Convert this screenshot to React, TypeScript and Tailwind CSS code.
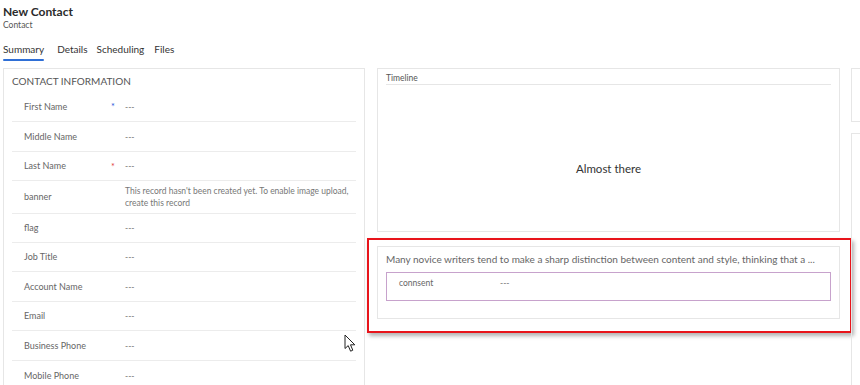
import React from 'react';

type Field = { label: string; value: string; req?: 'blue' | 'red'; h: number };

const fields: Field[] = [
  { label: 'First Name', value: '---', req: 'blue', h: 30 },
  { label: 'Middle Name', value: '---', h: 30 },
  { label: 'Last Name', value: '---', req: 'red', h: 29 },
  { label: 'banner', value: "This record hasn't been created yet. To enable image upload, create this record", h: 33 },
  { label: 'flag', value: '---', h: 29 },
  { label: 'Job Title', value: '---', h: 29 },
  { label: 'Account Name', value: '---', h: 30 },
  { label: 'Email', value: '---', h: 29 },
  { label: 'Business Phone', value: '---', h: 30 },
  { label: 'Mobile Phone', value: '---', h: 30 },
];

const FieldRow = ({ f, last }: { f: Field; last: boolean }) => (
  <div
    className={`mx-[8px] flex items-center ${last ? '' : 'border-b border-[#ececec]'}`}
    style={{ height: f.h }}
  >
    <div className="w-[99px] pl-[12px] text-[9px] text-[#666] shrink-0">{f.label}</div>
    <div className="w-[14px] shrink-0 text-[9px] leading-none">
      {f.req === 'blue' && <span className="text-[#2b55d9]">*</span>}
      {f.req === 'red' && <span className="text-[#e04040]">*</span>}
    </div>
    <div className="text-[8.5px] leading-[12px] text-[#777] pr-[4px]">{f.value}</div>
  </div>
);

const Cursor = () => (
  <svg width="13" height="19" viewBox="0 0 13 19" className="absolute left-[344px] top-[334px]">
    <path
      d="M1 1 L1 14.5 L4.2 11.6 L6.6 17.2 L8.8 16.2 L6.5 10.8 L10.8 10.8 Z"
      fill="#fff"
      stroke="#222"
      strokeWidth="1"
      strokeLinejoin="round"
    />
  </svg>
);

export default function App() {
  return (
    <div className="relative w-[860px] h-[385px] overflow-hidden bg-white font-['Lato','Open_Sans',sans-serif]">
      {/* header */}
      <div className="pl-[3px] pt-[4px]">
        <div className="text-[12px] leading-[16px] font-bold text-[#2b2b2b]">New Contact</div>
        <div className="text-[8.5px] leading-[10px] text-[#555]">Contact</div>
      </div>

      {/* tabs */}
      <div className="flex pl-[3px] mt-[13px] text-[10px] text-[#333]">
        <div className="flex flex-col items-start">
          <span className="leading-[13px]">Summary</span>
          <span className="mt-[3px] h-[2px] w-[41px] rounded-full bg-[#2f6fd6]" />
        </div>
        <span className="ml-[13px] leading-[13px]">Details</span>
        <span className="ml-[9px] leading-[13px]">Scheduling</span>
        <span className="ml-[10px] leading-[13px]">Files</span>
      </div>

      {/* body */}
      <div className="flex pl-[3px] mt-[7px] items-start">
        {/* left panel */}
        <div className="w-[362px] h-[330px] shrink-0 border border-[#e6e6e6] border-b-0">
          <div className="pl-[8px] pt-[5px] h-[20px] text-[10px] leading-[14px] text-[#555]">
            CONTACT INFORMATION
          </div>
          <div className="mt-[3px]">
            {fields.map((f, i) => (
              <FieldRow key={f.label} f={f} last={i === fields.length - 1} />
            ))}
          </div>
        </div>

        {/* middle column */}
        <div className="ml-[12px] w-[463px] shrink-0 flex flex-col">
          <div className="h-[164px] border border-[#e6e6e6] flex flex-col">
            <div className="mx-[8px] pt-[4px] pb-[1px] border-b border-[#e6e6e6] text-[8.5px] leading-[10px] text-[#555]">
              Timeline
            </div>
            <div className="flex-1 flex items-center justify-center pt-[22px] text-[11.5px] text-[#333]">
              Almost there
            </div>
          </div>

          <div className="mt-[6px] -ml-[10px] -mr-[12px] border-2 border-[#e8141b] pl-[8px] pr-[10px] pt-[6px] pb-[12px] shadow-[2px_3px_4px_rgba(0,0,0,0.3)]">
            <div className="h-[73px] border border-[#e6e6e6] px-[8px] pt-[6px]">
              <div className="text-[10px] leading-[13px] text-[#666] whitespace-nowrap overflow-hidden">
                Many novice writers tend to make a sharp distinction between content and style, thinking that a ...
              </div>
              <div className="mt-[6px] h-[29px] border-[1.5px] border-[#c7a2cc] flex items-start pt-[4px]">
                <span className="pl-[12px] w-[113px] text-[8.5px] text-[#666]">connsent</span>
                <span className="text-[8.5px] text-[#777]">---</span>
              </div>
            </div>
          </div>

          <div className="h-[60px]" />
        </div>

        {/* right column (cut off) */}
        <div className="ml-[11px] flex-1 flex flex-col">
          <div className="h-[54px] border border-[#e6e6e6] border-r-0" />
          <div className="mt-[11px] h-[260px] border border-[#e6e6e6] border-r-0" />
        </div>
      </div>

      <Cursor />
    </div>
  );
}
